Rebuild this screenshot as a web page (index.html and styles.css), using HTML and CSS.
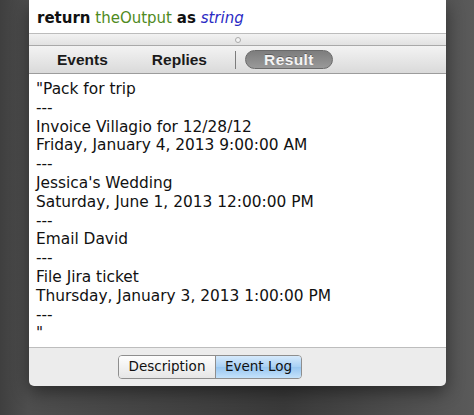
FILE: index.html
```html
<!DOCTYPE html>
<html>
<head>
    <title>Script Result</title>
    <link rel="stylesheet" href="styles.css">
</head>
<body>
    <div class="window">
        <div class="code-line">
            <b>return</b> <span class="var">theOutput</span> <b>as</b> <i class="type">string</i>
        </div>
        <div class="splitter"><span class="grip"></span></div>
        <div class="tabbar">
            <span class="tab tab-events">Events</span>
            <span class="tab tab-replies">Replies</span>
            <span class="tab-sep"></span>
            <span class="tab tab-active">Result</span>
        </div>
        <div class="result">
            <div>"Pack for trip</div>
            <div>---</div>
            <div>Invoice Villagio for 12/28/12</div>
            <div>Friday, January 4, 2013 9:00:00 AM</div>
            <div>---</div>
            <div>Jessica's Wedding</div>
            <div>Saturday, June 1, 2013 12:00:00 PM</div>
            <div>---</div>
            <div>Email David</div>
            <div>---</div>
            <div>File Jira ticket</div>
            <div>Thursday, January 3, 2013 1:00:00 PM</div>
            <div>---</div>
            <div>"</div>
        </div>
        <div class="footer">
            <div class="segmented">
                <span class="seg seg-desc">Description</span>
                <span class="seg seg-on">Event Log</span>
            </div>
        </div>
    </div>
</body>
</html>
```

FILE: styles.css
```css
body {
    margin: 0;
    height: 415px;
    overflow: hidden;
    background: linear-gradient(to right, #3f3f3f 0px, #4e4e4e 28px, #3a3a3a 60%, #5a5a5a 100%);
    font-family: 'DejaVu Sans', 'Liberation Sans', sans-serif;
}

.window {
    margin-left: 29px;
    width: 417px;
    height: 386px;
    background: #ececec;
    border-radius: 0 0 5px 5px;
    box-shadow: 0 6px 18px rgba(0, 0, 0, 0.45);
    display: flex;
    flex-direction: column;
    overflow: hidden;
}

.code-line {
    height: 33px;
    box-sizing: border-box;
    background: white;
    padding: 9px 0 0 8px;
    font-size: 15px;
    color: #111;
}

.var {
    color: #4f8a22;
}

.type {
    color: #2a2ac4;
}

.splitter {
    height: 11px;
    border-top: 1px solid #bcbcbc;
    border-bottom: 1px solid #a9a9a9;
    background: linear-gradient(to bottom, #f2f2f2, #e2e2e2);
    display: flex;
    justify-content: center;
    align-items: center;
}

.grip {
    width: 4px;
    height: 4px;
    border-radius: 50%;
    border: 1px solid #aaa;
    background: #f4f4f4;
}

.tabbar {
    height: 28px;
    box-sizing: border-box;
    border-bottom: 1px solid #9c9c9c;
    background: linear-gradient(to bottom, #f3f3f3, #dadada);
    display: flex;
    align-items: center;
    font-family: 'Liberation Sans', sans-serif;
    font-size: 15.5px;
    font-weight: bold;
    color: #1a1a1a;
}

.tab-events {
    margin-left: 28px;
}

.tab-replies {
    margin-left: 44px;
}

.tab-sep {
    width: 1px;
    height: 18px;
    background: #7c7c7c;
    margin-left: 28px;
}

.tab-active {
    margin-left: 9px;
    width: 88px;
    height: 19px;
    line-height: 18px;
    text-align: center;
    border-radius: 10px;
    background: linear-gradient(to bottom, #7d7d7d, #999);
    border: 1px solid #6a6a6a;
    box-sizing: border-box;
    color: #f4f4f4;
    letter-spacing: 0.4px;
    text-shadow: 0 -1px 0 rgba(0, 0, 0, 0.3);
}

.result {
    flex: 1;
    background: white;
    padding: 6px 0 0 7px;
    font-size: 15.4px;
    line-height: 18.8px;
    color: #111;
}

.footer {
    height: 39px;
    box-sizing: border-box;
    border-top: 1px solid #bdbdbd;
    padding-top: 7px;
    padding-left: 89px;
}

.segmented {
    display: inline-flex;
    height: 22px;
    border: 1px solid #8e8e8e;
    border-radius: 4px;
    overflow: hidden;
    font-size: 13.5px;
}

.seg {
    line-height: 21px;
    text-align: center;
    color: #111;
    background: linear-gradient(to bottom, #fdfdfd, #e6e6e6);
}

.seg-desc {
    width: 96px;
}

.seg-on {
    width: 85px;
    border-left: 1px solid #8e8e8e;
    background: linear-gradient(to bottom, #d6eafc, #a8d0f4 50%, #98c6f0 51%, #c4e2fb);
}
```
